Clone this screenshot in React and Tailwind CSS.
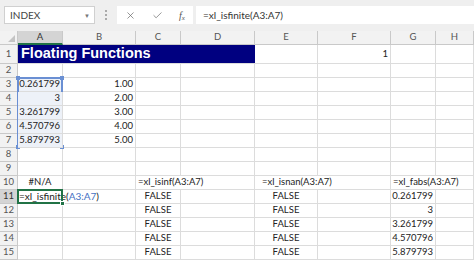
import React from 'react'
import { X, Check } from 'lucide-react'

const cols = ['A', 'B', 'C', 'D', 'E', 'F', 'G', 'H']
const inputs = {
  3: ['0.261799', '1.00'],
  4: ['3', '2.00'],
  5: ['3.261799', '3.00'],
  6: ['4.570796', '4.00'],
  7: ['5.879793', '5.00'],
}
const fabs = { 11: '0.261799', 12: '3', 13: '3.261799', 14: '4.570796', 15: '5.879793' }

const font = { fontFamily: 'Lato, "Open Sans", sans-serif' }

function Cell({ span = 1, align = 'left', className = '', children }) {
  const spanCls = span === 2 ? 'col-span-2' : span === 4 ? 'col-span-4' : ''
  const alignCls = align === 'right' ? 'justify-end' : align === 'center' ? 'justify-center' : 'justify-start'
  return (
    <div
      className={`flex items-center ${alignCls} ${spanCls} h-[14px] px-[2px] border-r border-b border-[#dcdcdc] text-[9.5px] text-[#222] whitespace-nowrap ${className}`}
    >
      {children}
    </div>
  )
}

function RowHead({ n, active }) {
  return (
    <div
      className={`flex items-center justify-center border-r border-b border-[#c9c9c9] text-[9.5px] ${
        active ? 'bg-[#d4d4d4] text-[#333]' : 'bg-[#f2f2f2] text-[#555]'
      } ${n === 1 ? 'h-[19px]' : 'h-[14px]'}`}
    >
      {n}
    </div>
  )
}

const App = () => {
  const rows = []
  for (let r = 2; r <= 15; r++) {
    const cells = [<RowHead key='h' n={r} active={r === 11} />]
    if (inputs[r]) {
      cells.push(
        <Cell key='a' align='right' className='relative bg-[#edf1f8]'>
          {inputs[r][0]}
          {r === 3 && (
            <div className='absolute left-[-1px] top-[-1px] w-[46px] h-[71px] border-2 border-[#6a8fd3] pointer-events-none'>
              <span className='absolute -left-[3px] -top-[3px] w-[4px] h-[4px] bg-[#6a8fd3]' />
              <span className='absolute -right-[3px] -top-[3px] w-[4px] h-[4px] bg-[#6a8fd3]' />
              <span className='absolute -left-[3px] -bottom-[3px] w-[4px] h-[4px] bg-[#6a8fd3]' />
              <span className='absolute -right-[3px] -bottom-[3px] w-[4px] h-[4px] bg-[#6a8fd3]' />
            </div>
          )}
        </Cell>,
        <Cell key='b' align='right'>{inputs[r][1]}</Cell>,
      )
      for (const c of ['C', 'D', 'E', 'F', 'G', 'H']) cells.push(<Cell key={c} />)
    } else if (r === 10) {
      cells.push(
        <Cell key='a' align='center'>#N/A</Cell>,
        <Cell key='b' />,
        <Cell key='c' span={2}>=xl_isinf(A3:A7)</Cell>,
        <Cell key='e' span={2} className='pl-[7px]'>=xl_isnan(A3:A7)</Cell>,
        <Cell key='g' span={2}>=xl_fabs(A3:A7)</Cell>,
      )
    } else if (fabs[r]) {
      if (r === 11) {
        cells.push(
          <Cell key='a' span={2} className='relative pl-[1px] text-[10px]'>
            =xl_isfinite(<span className='text-[#4472c4]'>A3:A7</span>)
            <div className='absolute left-[-1px] top-[-1px] w-[46px] h-[15px] border-2 border-[#217346] pointer-events-none'>
              <span className='absolute -right-[4px] -bottom-[4px] w-[5px] h-[5px] bg-[#217346] border border-white' />
            </div>
          </Cell>,
        )
      } else {
        cells.push(<Cell key='a' />, <Cell key='b' />)
      }
      cells.push(
        <Cell key='c' align='center'>FALSE</Cell>,
        <Cell key='d' />,
        <Cell key='e' align='center'>FALSE</Cell>,
        <Cell key='f' />,
        <Cell key='g' align='right'>{fabs[r]}</Cell>,
        <Cell key='h' />,
      )
    } else {
      for (const c of cols) cells.push(<Cell key={c} />)
    }
    rows.push(<React.Fragment key={r}>{cells}</React.Fragment>)
  }

  return (
    <div className='w-[474px] h-[262px] overflow-hidden bg-white' style={font}>
      {/* formula bar */}
      <div className='h-[31px] bg-[#efefef] flex items-start pt-[6px] pl-[4px]'>
        <div className='w-[91px] h-[18px] bg-white border border-[#d0d0d0] flex items-center justify-between pl-[5px] pr-[4px]'>
          <span className='text-[10px] text-[#444]'>INDEX</span>
          <span className='text-[6px] text-[#777]'>▼</span>
        </div>
        <div className='w-[22px] h-[18px] flex flex-col items-center justify-center gap-[2px]'>
          <span className='w-[2px] h-[2px] bg-[#aaa]' />
          <span className='w-[2px] h-[2px] bg-[#aaa]' />
          <span className='w-[2px] h-[2px] bg-[#aaa]' />
        </div>
        <div className='w-[76px] h-[18px] bg-white flex items-center justify-around'>
          <X size={11} strokeWidth={1.5} color='#666' />
          <Check size={11} strokeWidth={1.5} color='#666' />
          <span className='text-[10px] text-[#555] italic' style={{ fontFamily: '"Liberation Serif", serif' }}>
            f<sub className='text-[7px]'>x</sub>
          </span>
        </div>
        <div className='ml-[3px] flex-1 h-[18px] bg-white flex items-center pl-[7px] text-[10px] text-[#333]'>
          =xl_isfinite(A3:A7)
        </div>
      </div>

      {/* sheet */}
      <div className='grid grid-cols-[18px_45px_73px_45px_74px_63px_73px_45px_1fr]'>
        <div className='h-[14px] bg-[#f2f2f2] border-r border-b border-[#c9c9c9] flex items-end justify-end p-[2px]'>
          <svg width='7' height='7' viewBox='0 0 7 7'>
            <polygon points='7,0 7,7 0,7' fill='#c4c4c4' />
          </svg>
        </div>
        {cols.map((c) => (
          <div
            key={c}
            className={`h-[14px] flex items-center justify-center border-r border-[#c9c9c9] text-[9.5px] ${
              c === 'A' ? 'bg-[#d4d4d4] border-b-2 border-b-[#217346] text-[#333]' : 'bg-[#f2f2f2] border-b text-[#555]'
            }`}
          >
            {c}
          </div>
        ))}

        <RowHead n={1} />
        <div className='col-span-4 h-[19px] bg-[#000080] border-b border-[#dcdcdc] flex items-center pl-[3px]'>
          <span className='text-white font-bold text-[14.5px]' style={{ fontFamily: '"Liberation Sans", Arial, sans-serif' }}>
            Floating Functions
          </span>
        </div>
        <Cell className='h-[19px]' />
        <Cell className='h-[19px]' align='right'>1</Cell>
        <Cell className='h-[19px]' />
        <Cell className='h-[19px]' />

        {rows}
      </div>
    </div>
  )
}

export default App
